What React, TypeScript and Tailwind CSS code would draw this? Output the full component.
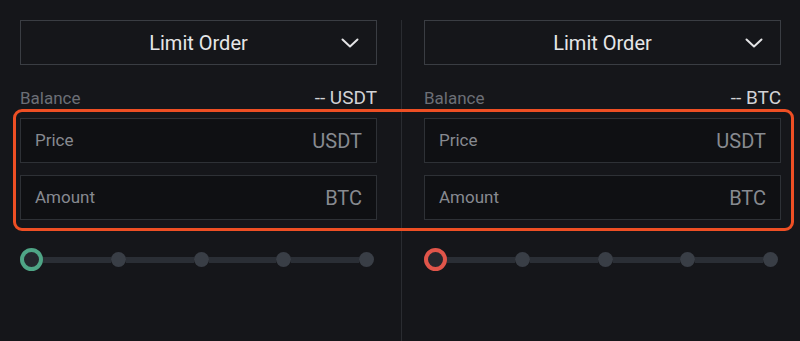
import React from "react";

type Side = {
  balance: string;
  handle: string;
};

const sides: Side[] = [
  { balance: "-- USDT", handle: "border-[#4fa586]" },
  { balance: "-- BTC", handle: "border-[#e0554a]" },
];

function Chevron() {
  return (
    <svg width="18" height="10" viewBox="0 0 18 10" fill="none">
      <polyline points="1.5,1.5 9,8.5 16.5,1.5" stroke="#e4e4e6" strokeWidth="2" strokeLinecap="round" strokeLinejoin="round" />
    </svg>
  );
}

function Field({ label, unit }: { label: string; unit: string }) {
  return (
    <div className="h-[45px] flex items-center justify-between px-[14px] bg-[#0f1013] border border-[#2e3136] text-[#878a90]">
      <span className="text-[17px]">{label}</span>
      <span className="text-[20px]">{unit}</span>
    </div>
  );
}

function Panel({ side }: { side: Side }) {
  return (
    <div className="w-[357px] flex flex-col">
      <div className="h-[45px] grid grid-cols-[1fr_auto_1fr] items-center border border-[#3a3d43]">
        <span />
        <span className="text-[20px] text-[#e6e6e8]">Limit Order</span>
        <span className="flex justify-end pr-[17px]">
          <Chevron />
        </span>
      </div>

      <div className="mt-[23px] h-5 flex items-center justify-between leading-5">
        <span className="text-[17px] text-[#6c6f76]">Balance</span>
        <span className="text-[19px] text-[#d2d3d6]">{side.balance}</span>
      </div>

      <div className="mt-[10px] flex flex-col gap-[12px]">
        <Field label="Price" unit="USDT" />
        <Field label="Amount" unit="BTC" />
      </div>

      <div className="mt-[28px] w-[354px] flex items-center">
        <div className={`w-[23px] h-[23px] rounded-full border-[4px] bg-[#24272d] shrink-0 ${side.handle}`} />
        {[0, 1, 2, 3].map((i) => (
          <React.Fragment key={i}>
            <div className="flex-1 h-[6px] bg-[#2a2e35]" />
            <div className="w-[15px] h-[15px] rounded-full bg-[#393e46] shrink-0" />
          </React.Fragment>
        ))}
      </div>
    </div>
  );
}

export default function App() {
  return (
    <div
      className="relative w-[800px] h-[341px] bg-[#15161a] flex pt-5 overflow-hidden"
      style={{ fontFamily: "Roboto, 'Liberation Sans', sans-serif" }}
    >
      <div className="pl-5 pr-6">
        <Panel side={sides[0]} />
      </div>
      <div className="w-px self-stretch bg-[#2a2c31]" />
      <div className="pl-[22px]">
        <Panel side={sides[1]} />
      </div>

      {/* highlight around the input fields */}
      <div className="absolute left-[13px] top-[109px] w-[781px] h-[122px] border-[3px] border-[#ee4f24] rounded-[9px] pointer-events-none" />
    </div>
  );
}
